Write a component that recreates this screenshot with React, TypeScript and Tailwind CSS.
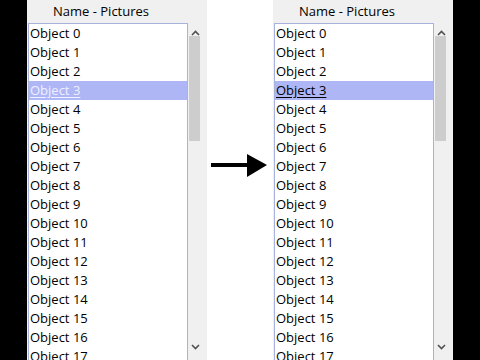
import React from "react";

const items = Array.from({ length: 18 }, (_, i) => `Object ${i}`);

function Chevron({ up }: { up: boolean }) {
  return (
    <svg width="9" height="6" viewBox="0 0 9 6" className="block">
      <path
        d={up ? "M1 5 L4.5 1.5 L8 5" : "M1 1 L4.5 4.5 L8 1"}
        fill="none"
        stroke="#505050"
        strokeWidth="1.6"
      />
    </svg>
  );
}

function Panel({ focused }: { focused: boolean }) {
  return (
    <div className="w-[180px] h-[360px] bg-[#f0f0f0] flex flex-col shrink-0">
      <div className="h-[23px] leading-[23px] pl-[26px] text-[13px] text-black">Name - Pictures</div>
      <div className="flex flex-1 min-h-0">
        <div className="ml-[1px] w-[160px] bg-white border-l border-t border-r border-[#a9b1dd] overflow-hidden">
          {items.map((t, i) => {
            const sel = i === 3;
            return (
              <div
                key={t}
                className={
                  "h-[19px] leading-[19px] pl-[1px] text-[13px] whitespace-nowrap " +
                  (sel
                    ? focused
                      ? "bg-[#aeb6f6] text-black underline underline-offset-2"
                      : "bg-[#aeb6f6] text-[#eef0ff] underline underline-offset-2"
                    : "text-black")
                }
              >
                {t}
              </div>
            );
          })}
        </div>
        <div className="w-[19px] flex flex-col items-start">
          <div className="h-[13px] w-[14px] flex items-end justify-center pl-[1px]">
            <Chevron up={true} />
          </div>
          <div className="ml-[1px] w-[11px] h-[105px] bg-[#cdcdcd]" />
          <div className="flex-1" />
          <div className="h-[16px] w-[14px] flex items-start justify-center pl-[1px]">
            <Chevron up={false} />
          </div>
        </div>
      </div>
    </div>
  );
}

export default function App() {
  return (
    <div
      className="w-[480px] h-[360px] flex bg-black overflow-hidden"
      style={{ fontFamily: '"Open Sans", "Noto Sans", sans-serif' }}
    >
      <div className="w-[27px] shrink-0 bg-black" />
      <Panel focused={false} />
      <div className="w-[66px] shrink-0 bg-white flex items-start">
        <svg width="66" height="360" viewBox="0 0 66 360" className="block">
          <rect x="4" y="163" width="38" height="4" fill="#000" />
          <polygon points="40,154 60,165 40,177" fill="#000" />
        </svg>
      </div>
      <Panel focused={true} />
      <div className="w-[27px] shrink-0 bg-black" />
    </div>
  );
}
